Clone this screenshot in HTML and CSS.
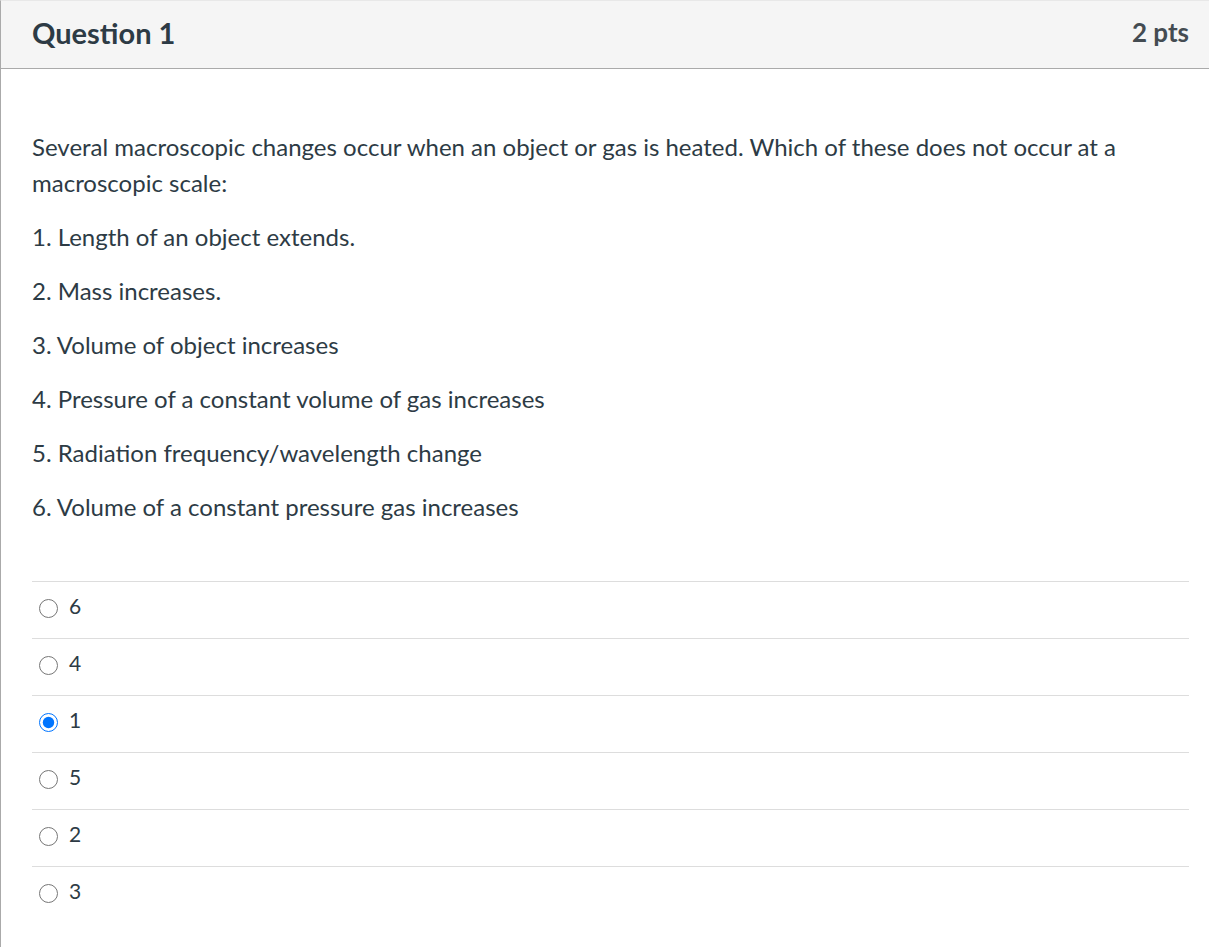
FILE: index.html
```html
<!DOCTYPE html>
<html>
<head>
<meta charset="utf-8">
<link rel="stylesheet" href="styles.css">
</head>
<body>
<div class="question">
  <div class="header">
    <span class="name">Question 1</span>
    <span class="pts">2 pts</span>
  </div>
  <div class="text">
    <p>Several macroscopic changes occur when an object or gas is heated. Which of these does not occur at a macroscopic scale:</p>
    <p>1. Length of an object extends.</p>
    <p>2. Mass increases.</p>
    <p>3. Volume of object increases</p>
    <p>4. Pressure of a constant volume of gas increases</p>
    <p>5. Radiation frequency/wavelength change</p>
    <p>6. Volume of a constant pressure gas increases</p>
  </div>
  <div class="answers">
    <label class="answer"><input type="radio" name="q1"><span class="label">6</span></label>
    <label class="answer"><input type="radio" name="q1"><span class="label">4</span></label>
    <label class="answer"><input type="radio" name="q1" checked><span class="label">1</span></label>
    <label class="answer"><input type="radio" name="q1"><span class="label">5</span></label>
    <label class="answer"><input type="radio" name="q1"><span class="label">2</span></label>
    <label class="answer"><input type="radio" name="q1"><span class="label">3</span></label>
  </div>
</div>
</body>
</html>
```
FILE: styles.css
```css
html, body {
  margin: 0;
  padding: 0;
  background: #fff;
}
body {
  font-family: Lato, "Liberation Sans", sans-serif;
  color: #2d3b45;
  height: 947px;
  overflow: hidden;
}
.question {
  border-left: 1px solid #aaaaaa;
  border-top: 1px solid #e8e8e8;
  min-height: 946px;
}
.header {
  box-sizing: border-box;
  height: 68px;
  background: #f5f5f5;
  border-bottom: 1px solid #aaaaaa;
  display: flex;
  align-items: center;
  justify-content: space-between;
  padding: 0 20px 5px 31px;
}
.name {
  font-weight: 700;
  font-size: 29px;
  color: #2d3b45;
}
.pts {
  font-weight: 700;
  font-size: 26px;
  color: #444c52;
}
.text {
  padding: 60px 20px 38px 31px;
}
.text p {
  margin: 0 0 18px;
  font-size: 24px;
  line-height: 36px;
}
.answers {
  margin: 0 20px 0 31px;
}
.answer {
  box-sizing: border-box;
  display: flex;
  align-items: center;
  height: 57px;
  padding-bottom: 3px;
  border-top: 1px solid #dddddd;
  font-family: Lato, "Liberation Sans", sans-serif;
  font-size: 21px;
  color: #2d3b45;
}
.answer input {
  width: 19px;
  height: 19px;
  margin: 0 11px 0 7px;
}
.label {
  line-height: 24px;
  margin-bottom: 5px;
}
```
